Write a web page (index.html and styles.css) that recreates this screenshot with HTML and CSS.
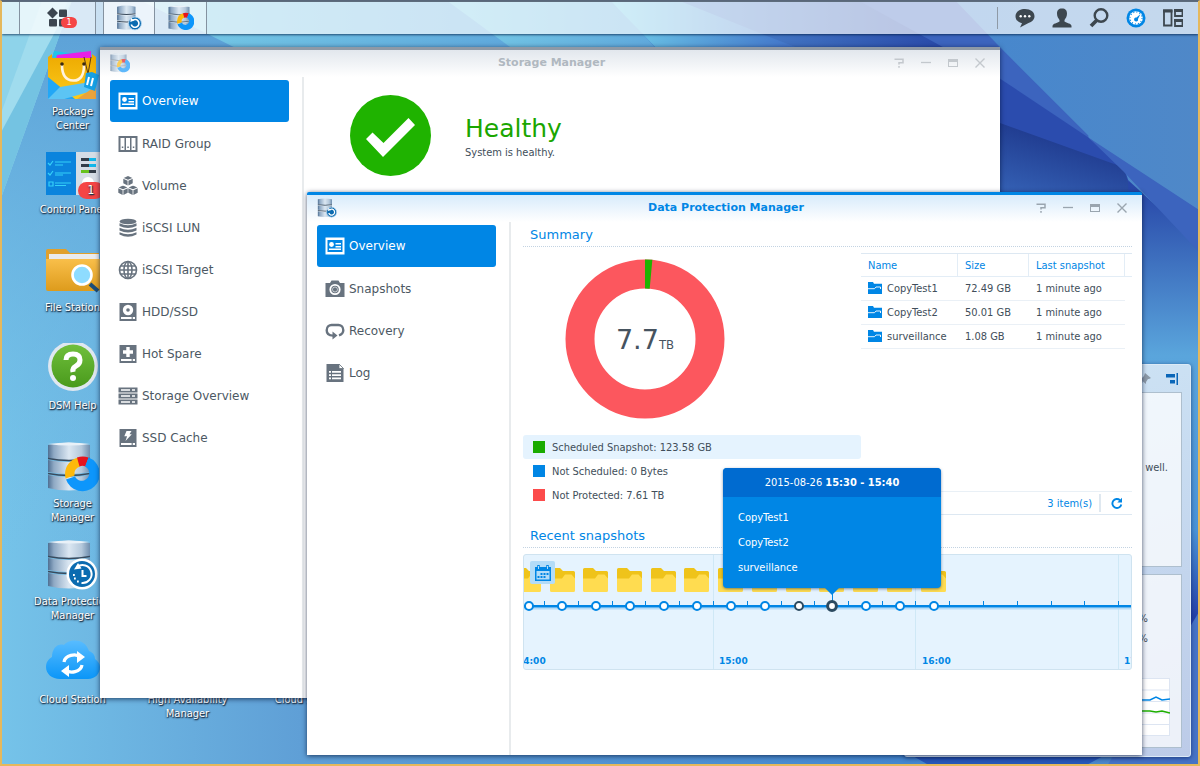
FILE: index.html
```html
<!DOCTYPE html>
<html lang="en">
<head>
  <meta charset="UTF-8" />
  <title>Disk Station</title>
  <link rel="stylesheet" href="styles.css">
</head>
<body>
  <!-- shared icon shapes -->
  <svg class="sprite" aria-hidden="true">
    <defs>
      <linearGradient id="metal" x1="0" x2="1" y1="0" y2="0">
        <stop offset="0" stop-color="#4f6f92"/>
        <stop offset=".14" stop-color="#8fa9c4"/>
        <stop offset=".5" stop-color="#dbe7f2"/>
        <stop offset=".8" stop-color="#b4c8db"/>
        <stop offset="1" stop-color="#6f8eae"/>
      </linearGradient>
      <linearGradient id="bag" x1="0" x2="0" y1="0" y2="1">
        <stop offset="0" stop-color="#eda900"/>
        <stop offset="1" stop-color="#fccb1c"/>
      </linearGradient>
      <linearGradient id="folderFill" x1="0" x2="0" y1="0" y2="1">
        <stop offset="0" stop-color="#f9bf4a"/>
        <stop offset="1" stop-color="#dd9b1c"/>
      </linearGradient>
      <linearGradient id="helpFill" x1="0" x2="0" y1="0" y2="1">
        <stop offset="0" stop-color="#6fbf3c"/>
        <stop offset="1" stop-color="#4a9a1c"/>
      </linearGradient>
      <linearGradient id="cloudFill" x1="0" x2="0" y1="0" y2="1">
        <stop offset="0" stop-color="#58bcff"/>
        <stop offset="1" stop-color="#0b96f8"/>
      </linearGradient>
    </defs>
    <symbol id="disks" viewBox="0 0 52 52">
      <path d="M1 4q20-5 42 0v13q-21 4-42 0z" fill="url(#metal)"/>
      <path d="M1 3q21-3 42 0q-21 3-42 0z" fill="#e9f1f8"/>
      <path d="M1 19q21 4 42 0v12q-21 4-42 0z" fill="url(#metal)"/>
      <path d="M1 34q21 4 42 0v13q-21 5-42 0z" fill="url(#metal)"/>
      <path d="M1 17.500q21 4 42 0M1 32.500q21 4 42 0" fill="none" stroke="#3a4a5c" stroke-width="1.500"/>
    </symbol>
    <symbol id="storage" viewBox="0 0 52 52">
      <use href="#disks"/>
      <path d="M35 33m-17 0a17 17 0 0 1 13-16.500l2 9a7.500 7.500 0 0 0-5.500 9l-9 3z" fill="#fdb90b"/>
      <path d="M30 16.500a17 17 0 0 1 11.500 0l-3 9a7.500 7.500 0 0 0-6 0z" fill="#e6131e"/>
      <path d="M41.500 16.500a17.400 17.400 0 1 1-22.500 22l9-3a7.500 7.500 0 1 0 10-10z" fill="#0d96fb"/>
    </symbol>
    <symbol id="protect" viewBox="0 0 52 52">
      <use href="#disks"/>
      <circle cx="35" cy="35" r="15.500" fill="#fff"/>
      <circle cx="35" cy="35" r="13" fill="#0b6bb0"/>
      <path d="M30 28a9 9 0 1 1 4.500 16" fill="none" stroke="#fff" stroke-width="2"/>
      <path d="M27 30.500l4-6.500 3.500 5.500z" fill="#fff"/>
      <path d="M35.500 31v6h4" fill="none" stroke="#fff" stroke-width="2"/>
      <path d="M26 36h1.800M27 39.500h1.800M30 42.500h1.800" stroke="#fff" stroke-width="1.800"/>
    </symbol>
    <symbol id="protect-small" viewBox="0 0 24 24">
      <path d="M1 1.500q8-2 17 0v6q-9 1.500-17 0zM1 9q9 1.500 17 0v5q-9 1.500-17 0zM1 16q9 1.500 17 0v6q-9 1.500-17 0z" fill="url(#metal)"/>
      <path d="M1 8q9 1.500 17 0M1 15q9 1.500 17 0" fill="none" stroke="#3a4a5c"/>
      <circle cx="17.500" cy="17" r="6" fill="#0b6bb0" stroke="#bfdcf2" stroke-width=".8"/>
      <path d="M15.500 14a3.600 3.600 0 1 1-1.400 4" fill="none" stroke="#fff" stroke-width="1.500"/>
      <path d="M13.200 15.700l.5-4 3.200 2.600z" fill="#fff"/>
    </symbol>
    <symbol id="overview" viewBox="0 0 20 20">
      <path fill-rule="evenodd" d="M.500 1.500h19v17H.500zM2.500 4v12h15V4z" fill="currentColor"/>
      <circle cx="6.500" cy="8.500" r="2.400" fill="currentColor"/>
      <path d="M10.500 7h5.500v1.500h-5.500zM10.500 10h5.500v1.500h-5.500zM4 12.500h12V14H4z" fill="currentColor"/>
    </symbol>
    <symbol id="raid" viewBox="0 0 20 20">
      <path fill-rule="evenodd" d="M.500 2h19v16H.500zM2.500 4v12h4V4zM8 4v12h4V4zM13.500 4v12h4V4z" fill="currentColor"/>
      <path d="M3.800 12.500h1.500v1.500H3.800zM9.300 12.500h1.500v1.500H9.300zM14.800 12.500h1.500v1.500h-1.500z" fill="currentColor"/>
    </symbol>
    <symbol id="cube" viewBox="0 0 10 10">
      <path d="M5 0l4.300 1.900L5 3.800.700 1.900zM.300 2.700l4.300 2v4.800l-4.300-2.200zM9.700 2.700l-4.300 2v4.800l4.300-2.200z" fill="currentColor"/>
    </symbol>
    <symbol id="volume" viewBox="0 0 20 20">
      <use href="#cube" x="5" y="0" width="10" height="10"/>
      <use href="#cube" x="0" y="9.500" width="10" height="10"/>
      <use href="#cube" x="10" y="9.500" width="10" height="10"/>
    </symbol>
    <symbol id="lun" viewBox="0 0 20 20">
      <ellipse cx="10" cy="3.500" rx="8.500" ry="2.800" fill="currentColor"/>
      <path d="M1.500 5.300q8.500 4 17 0v2.700q-8.500 4-17 0zM1.500 9.800q8.500 4 17 0v2.700q-8.500 4-17 0zM1.500 14.300q8.500 4 17 0v2.200q-8.500 4.500-17 0z" fill="currentColor"/>
    </symbol>
    <symbol id="globe" viewBox="0 0 20 20">
      <g fill="none" stroke="currentColor" stroke-width="1.600">
        <circle cx="10" cy="10" r="8.500"/>
        <ellipse cx="10" cy="10" rx="4" ry="8.500"/>
        <path d="M10 2v16M2 10h16M3 6h14M3 14h14"/>
      </g>
    </symbol>
    <symbol id="hdd" viewBox="0 0 20 20">
      <path fill-rule="evenodd" d="M1.500 1h17v18h-17zM3 15v2h14v-2z" fill="currentColor"/>
      <circle cx="10" cy="8" r="5.200" fill="#fff"/>
      <circle cx="10" cy="8" r="1.800" fill="currentColor"/>
      <path d="M13.500 15.300h1.500v1.500h-1.500z" fill="currentColor"/>
    </symbol>
    <symbol id="spare" viewBox="0 0 20 20">
      <path fill-rule="evenodd" d="M1.500 1h17v18h-17zM3 15v2h14v-2z" fill="currentColor"/>
      <path d="M8.300 3h3.400v3.300H15v3.400h-3.300V13H8.300V9.700H5V6.300h3.300z" fill="#fff"/>
      <path d="M13.500 15.300h1.500v1.500h-1.500z" fill="currentColor"/>
    </symbol>
    <symbol id="stack" viewBox="0 0 20 20">
      <path fill-rule="evenodd" d="M.500 1.500h19v5H.500zM3 3.200v1.500h9V3.200zM14 3.200v1.500h3V3.200zM.500 7.500h19v5H.500zM3 9.200v1.500h9V9.200zM14 9.200v1.500h3V9.200zM.500 13.500h19v5H.500zM3 15.200v1.500h9v-1.500zM14 15.200v1.500h3v-1.500z" fill="currentColor"/>
    </symbol>
    <symbol id="cache" viewBox="0 0 20 20">
      <path fill-rule="evenodd" d="M1.500 1h17v18h-17zM3 15v2h14v-2z" fill="currentColor"/>
      <path d="M8.500 3h5l-2 3.200h2.300L7.500 13l1.600-4.800H6.300z" fill="#fff"/>
      <path d="M13.500 15.300h1.500v1.500h-1.500z" fill="currentColor"/>
    </symbol>
    <symbol id="camera" viewBox="0 0 20 20">
      <path d="M.500 4H5l1.500-2.500h7L15 4h4.500v14H.500z" fill="currentColor"/>
      <circle cx="10" cy="10.500" r="4.700" fill="none" stroke="#fff" stroke-width="1.800"/>
      <circle cx="10" cy="10.500" r="2.500" fill="none" stroke="#fff" stroke-width=".6"/>
    </symbol>
    <symbol id="recover" viewBox="0 0 20 20">
      <path d="M14 14.300C17 13.300 18.300 11.500 18.300 9.200 18.300 5.500 15.500 4 13.500 4H6.500C4.500 4 1.700 5.500 1.700 9.200 1.700 12.500 4 14.500 8 14.600" fill="none" stroke="currentColor" stroke-width="2.400"/>
      <path d="M7.500 10.600l5 4-5 4z" fill="currentColor"/>
    </symbol>
    <symbol id="log" viewBox="0 0 20 20">
      <path d="M1.500 1H14l4.500 4.500V19h-17z" fill="currentColor"/>
      <path d="M14 1v4.500h4.500z" fill="#fff" stroke="currentColor" stroke-width=".8"/>
      <path d="M4 8h2v1.700H4zM7 8h9v1.700H7zM4 11.300h2V13H4zM7 11.300h9V13H7zM4 14.600h2v1.700H4zM7 14.600h9v1.700H7z" fill="#fff"/>
    </symbol>
    <symbol id="win-help" viewBox="0 0 10 10">
      <path d="M.5 1.200h8.500v3.600H5v1.700M5 8v1.700" fill="none" stroke="currentColor" stroke-width="1.500"/>
    </symbol>
    <symbol id="win-min" viewBox="0 0 10 10">
      <path d="M0 4.500h10" stroke="currentColor" stroke-width="1.300"/>
    </symbol>
    <symbol id="win-max" viewBox="0 0 10 10">
      <path fill-rule="evenodd" d="M0 1h10v8H0zM1 4v4h8V4z" fill="currentColor"/>
    </symbol>
    <symbol id="win-close" viewBox="0 0 10 10">
      <path d="M.5.5l9 9M9.500.5l-9 9" stroke="currentColor" stroke-width="1.400"/>
    </symbol>
    <symbol id="share" viewBox="0 0 14 12">
      <path d="M0 0h5l1 1.800h8V12H0z" fill="#0086e5"/>
      <path d="M0 6.700h6.500L8 5h4.500v2" fill="none" stroke="#fff" stroke-width=".9"/>
    </symbol>
    <symbol id="snap" viewBox="0 0 25 24">
      <path d="M0 1.500Q0 0 1.500 0H10l3 3h10.500q1.500 0 1.500 1.500V14H0z" fill="#efc31a"/>
      <path d="M0 10.500h12l3-4h6.500l3.500 4v12q0 1.500-1.500 1.500h-22Q0 24 0 22.500z" fill="#ffdc50"/>
    </symbol>
  </svg>

  <div class="desktop">
    <svg class="wallpaper" viewBox="0 0 1200 766" preserveAspectRatio="none" aria-hidden="true">
      <defs>
        <linearGradient id="sky" x1="0" x2="1" y1="0" y2="0">
          <stop offset="0" stop-color="#75c3e9"/>
          <stop offset=".25" stop-color="#5f9fd6"/>
          <stop offset=".75" stop-color="#4487cf"/>
          <stop offset="1" stop-color="#4f88c8"/>
        </linearGradient>
        <linearGradient id="leftSky" x1="0" x2="0" y1="0" y2="1">
          <stop offset="0" stop-color="#5b9fd6"/>
          <stop offset="1" stop-color="#75c3e9" stop-opacity="0"/>
        </linearGradient>
        <linearGradient id="beam" x1="0" x2="1" y1="0" y2="0">
          <stop offset="0" stop-color="#76cbe6"/>
          <stop offset="1" stop-color="#5fa8dc"/>
        </linearGradient>
        <linearGradient id="beamDark" x1="0" x2="1" y1="0" y2="0">
          <stop offset="0" stop-color="#6fcde9"/>
          <stop offset="1" stop-color="#3f6fc8"/>
        </linearGradient>
        <linearGradient id="indigo" x1="0" x2="1" y1="0" y2="0">
          <stop offset="0" stop-color="#4f8bd0"/>
          <stop offset="1" stop-color="#2848a8"/>
        </linearGradient>
        <linearGradient id="deep" x1="0" x2=".4" y1="1" y2="0">
          <stop offset="0" stop-color="#3f74c8"/>
          <stop offset="1" stop-color="#1c3488"/>
        </linearGradient>
        <linearGradient id="edge" x1="0" x2="0" y1="0" y2="1">
          <stop offset="0" stop-color="#2643a6"/>
          <stop offset=".3" stop-color="#5aa5dc"/>
          <stop offset=".6" stop-color="#4a93d6"/>
          <stop offset=".75" stop-color="#2440a8"/>
          <stop offset="1" stop-color="#3f78c8"/>
        </linearGradient>
      </defs>
      <rect width="1200" height="766" fill="url(#sky)"/>
      <rect width="310" height="600" fill="url(#leftSky)"/>
      <path d="M0 0h70L0 195z" fill="#8ed3ea"/>
      <path d="M40 0h26L0 160v-50z" fill="#a0dcee"/>
      <path d="M70 0L0 195V130z" fill="#74c3e2"/>
      <path d="M140 0h310l65 50H240z" fill="url(#beam)"/>
      <path d="M447 0h166l45 50H515z" fill="url(#beam)"/>
      <path d="M611 0h74l120 50H659z" fill="url(#beamDark)"/>
      <path d="M680 0h200l73 50H805z" fill="url(#indigo)"/>
      <path d="M860 0h97l43 45 90 90v60H1000V77z" fill="#3c64be"/>
      <path d="M1000 77l90 60 35 28 20 60H1000z" fill="#2b4cae"/>
      <path d="M1000 122l125 45 20 60H1000z" fill="url(#deep)"/>
      <path d="M1130 180l44 40 26 30v516h-70z" fill="url(#edge)"/>
      <path d="M1090 137l110 72v42l-75-80z" fill="#3c64be"/>
      <path d="M900 750h220l-30 16H928z" fill="#2757b8"/>
      <path d="M1200 615v151h-90z" fill="#4673c6"/>
    </svg>

    <header class="taskbar">
      <button class="task task-menu" aria-label="Main Menu">
        <svg width="24" height="24" viewBox="0 0 24 24"><g fill="#3c4650"><path d="M6.500 1.500L12 7l-5.500 5.500L1 7z"/><rect x="13" y="3.500" width="8" height="7.500" rx="1"/><rect x="3" y="13" width="8" height="7.500" rx="1"/><rect x="13" y="13" width="8" height="7.500" rx="1"/></g></svg>
        <span class="badge badge-menu">1</span>
      </button>
      <button class="task task-app task-open" aria-label="Data Protection Manager"><svg width="26" height="26"><use href="#protect-small"/></svg></button>
      <button class="task task-app" aria-label="Storage Manager"><svg width="26" height="26"><use href="#storage"/></svg></button>
      <div class="tray">
        <button aria-label="Notifications"><svg width="20" height="20" viewBox="0 0 20 20"><path d="M10 1c5.500 0 9.500 3 9.500 7.200 0 3.300-2.500 5.800-6 6.800L5 19.500l2-4.300C3 14.500.500 11.800.500 8.200.500 4 4.500 1 10 1z" fill="#3d474f"/><g fill="#fff"><circle cx="5.700" cy="8.300" r="1.200"/><circle cx="10" cy="8.300" r="1.200"/><circle cx="14.300" cy="8.300" r="1.200"/></g></svg></button>
        <button aria-label="Options"><svg width="20" height="20" viewBox="0 0 20 20"><path d="M10 .500c3.500 0 5 2 5 5 0 3-1.200 4.500-2.500 6.500v1.500c2 1.500 7 2 7 4.500v1.500H.500V18c0-2.500 5-3 7-4.500V12C6.200 10 5 8.500 5 5.500c0-3 1.500-5 5-5z" fill="#3d474f"/></svg></button>
        <button aria-label="Search"><svg width="20" height="20" viewBox="0 0 20 20"><circle cx="12" cy="7.500" r="6.300" fill="none" stroke="#3d474f" stroke-width="2.400"/><path d="M7.500 12.500L2 18" stroke="#3d474f" stroke-width="3.800"/></svg></button>
        <button aria-label="Widgets"><svg width="20" height="20" viewBox="0 0 20 20"><circle cx="10" cy="10" r="9.500" fill="#0086e5"/><circle cx="10" cy="10" r="6.800" fill="#fff"/><circle cx="10" cy="10" r="6" fill="none" stroke="#0086e5" stroke-width="1.200" stroke-dasharray="1 2.100"/><path d="M10.500 9.500l4-3.500-2.500 5a2 2 0 1 1-1.500-1.500z" fill="#0086e5"/></svg></button>
        <button aria-label="Pilot View"><svg width="20" height="20" viewBox="0 0 20 20"><g fill="none" stroke="#3d474f" stroke-width="1.800"><path d="M1 2.500h7.500v15H1zM12 2h7.500v6H12zM12 12h7.500v6H12z"/><path d="M0 3h9.500M11 2.500h9M11 12.500h9" stroke-width="2.800"/></g></svg></button>
      </div>
    </header>

    <div class="shortcuts">
      <a class="shortcut" href="#">
        <svg width="52" height="52" viewBox="0 0 52 52"><path d="M7 2l22 3v8H5z" fill="#22c3ea"/><path d="M10 6l34-4v12H8z" fill="#e81fe8"/><path d="M1 8l4-3v4h40V5l4 3v42H1z" fill="url(#bag)"/><path d="M1 28l27 22H1z" fill="#22a7f6"/><path d="M49 32L1 50h16z" fill="#58c4f8"/><path d="M13 38l36-6v9L17 50H1z" fill="#5cc4f4"/><path d="M30 50l19-13v13z" fill="#e9a33c"/><path d="M15 16q0 15 11 15.500T37 16" fill="none" stroke="#fff3dc" stroke-width="2.600"/><circle cx="15" cy="15" r="1.800" fill="#3a2a12"/><circle cx="37" cy="15" r="1.800" fill="#3a2a12"/><path d="M37 8l4 17M44 8l-3 17" stroke="#5b3b14" fill="none"/><path d="M39 24l6-1 7 3-4 16-11-4z" fill="#16a0e4"/><path d="M42 28l-2 8M46 29l-2 8" stroke="#fff" stroke-width="2"/></svg>
        <span>Package<br>Center</span>
      </a>
      <a class="shortcut" href="#">
        <svg width="54" height="52" viewBox="0 0 54 52"><path d="M0 5h30v43H0z" fill="#0b84dd"/><path d="M30 5h24v43H30z" fill="#d5dde5"/><g stroke="#35d0f8" fill="none" stroke-width="1.200"><path d="M2 16l2 2 3-4M2 26l2 2 3-4M3 35h4v4H3zM9 15h16M9 18h8M9 26h16M9 28h8M9 36h16M9 38.500h11"/></g><path d="M35 11h8v3h-8zM35 17h8v3h-8zM43 23h7v3h-7z" fill="#333d48"/><path d="M43 11h7v3h-7zM43 17h7v3h-7z" fill="#12b7ea"/><path d="M35 23h8v3h-8z" fill="#67c21d"/><circle cx="42" cy="36" r="6" fill="#fff"/></svg>
        <b class="badge badge-panel">1</b>
        <span>Control Panel</span>
      </a>
      <a class="shortcut" href="#">
        <svg width="56" height="52" viewBox="0 0 56 52"><path d="M1 6q0-2 2-2h18l4 4h29v12H1z" fill="#e0a02c"/><path d="M4 9h50v8H4z" fill="#e9ebee"/><path d="M1 14h54v30q0 2-2 2H3q-2 0-2-2z" fill="url(#folderFill)"/><path d="M45 39l8 7" stroke="#1b4d78" stroke-width="4"/><circle cx="37" cy="30" r="9.500" fill="#8edcff" stroke="#fff" stroke-width="2.600"/></svg>
        <span>File Station</span>
      </a>
      <a class="shortcut" href="#">
        <svg width="52" height="52" viewBox="0 3 52 52"><circle cx="26" cy="26" r="25" fill="#dfe7f0"/><circle cx="26" cy="26" r="21.500" fill="url(#helpFill)"/><path d="M19 20q0-6 7-6t7 6q0 4-4 6t-3 6" fill="none" stroke="#fff" stroke-width="5"/><circle cx="26" cy="38" r="3" fill="#fff"/></svg>
        <span>DSM Help</span>
      </a>
      <a class="shortcut" href="#">
        <svg width="52" height="52"><use href="#storage"/></svg>
        <span>Storage<br>Manager</span>
      </a>
      <a class="shortcut" href="#">
        <svg width="52" height="52"><use href="#protect"/></svg>
        <span>Data Protection<br>Manager</span>
      </a>
      <a class="shortcut" href="#">
        <svg width="54" height="52" viewBox="0 3 54 52"><path d="M14 45C6 45 0 40 0 33c0-6 4-9 6-10 0-9 6-14 12-12 4-6 21-8 25 6 5 2 6 5 6 8 3 2 5 5 5 8 0 7-5 12-12 12z" fill="url(#cloudFill)"/><path d="M18 28c1-7 12-9 16-5M36 31c-1 7-12 9-16 5" fill="none" stroke="#fff" stroke-width="3.200"/><path d="M31 17l8 6-8 6zM23 31l-8 6 8 6z" fill="#fff"/></svg>
        <span>Cloud Station</span>
      </a>
      <a class="shortcut second" href="#"><span>High Availability<br>Manager</span></a>
      <a class="shortcut third" href="#"><span>Cloud Sync</span></a>
    </div>

    <aside class="widgets">
      <div class="widgets-bar">
        <svg width="12" height="12" viewBox="0 0 12 12"><path d="M6 0l6 5-2 1-1 0-2 3v2L1 6l2-1 2-2zM3 8l1 1-4 3z" fill="#8d9aa8"/></svg>
        <svg width="12" height="12" viewBox="0 0 12 12"><path d="M0 1h9v3.500H0zM4 7h5v3.500H4zM10.500 0H12v12h-1.500z" fill="#0a66b8"/></svg>
      </div>
      <section class="card card-health"><p>well.</p></section>
      <section class="card card-load">
        <p>%</p>
        <p>%</p>
        <svg width="60" height="58" viewBox="0 0 60 58"><rect x=".5" y=".5" width="59" height="57" fill="#fff" stroke="#dde5f2"/><path d="M0 12h60M0 23.500h60M0 35h60M0 46.500h60" stroke="#dde5f2"/><path d="M0 22h40l6-3 6 3 8-1" fill="none" stroke="#0086e5" stroke-width="1.500"/><path d="M0 33h40l6 1 6-1 8 2" fill="none" stroke="#1fb000" stroke-width="1.500"/></svg>
      </section>
    </aside>

    <div class="window window-storage">
      <header class="titlebar">
        <svg class="title-icon" width="20" height="20"><use href="#storage"/></svg>
        <h2>Storage Manager</h2>
        <div class="controls">
          <button aria-label="Help"><svg width="10" height="10"><use href="#win-help"/></svg></button>
          <button aria-label="Minimize"><svg width="10" height="10"><use href="#win-min"/></svg></button>
          <button aria-label="Maximize"><svg width="10" height="10"><use href="#win-max"/></svg></button>
          <button aria-label="Close"><svg width="10" height="10"><use href="#win-close"/></svg></button>
        </div>
      </header>
      <div class="window-body">
        <nav class="side">
          <a class="side-item active" href="#"><svg width="20" height="20"><use href="#overview"/></svg>Overview</a>
          <a class="side-item" href="#"><svg width="20" height="20"><use href="#raid"/></svg>RAID Group</a>
          <a class="side-item" href="#"><svg width="20" height="20"><use href="#volume"/></svg>Volume</a>
          <a class="side-item" href="#"><svg width="20" height="20"><use href="#lun"/></svg>iSCSI LUN</a>
          <a class="side-item" href="#"><svg width="20" height="20"><use href="#globe"/></svg>iSCSI Target</a>
          <a class="side-item" href="#"><svg width="20" height="20"><use href="#hdd"/></svg>HDD/SSD</a>
          <a class="side-item" href="#"><svg width="20" height="20"><use href="#spare"/></svg>Hot Spare</a>
          <a class="side-item" href="#"><svg width="20" height="20"><use href="#stack"/></svg>Storage Overview</a>
          <a class="side-item" href="#"><svg width="20" height="20"><use href="#cache"/></svg>SSD Cache</a>
        </nav>
        <main class="health">
          <svg width="81" height="81" viewBox="0 0 81 81"><circle cx="40.500" cy="40.500" r="40.500" fill="#1fb300"/><path d="M16 44l6.500-6.500L33.500 48l25-25 6.500 7-32 32z" fill="#fff"/></svg>
          <div>
            <h1>Healthy</h1>
            <p>System is healthy.</p>
          </div>
        </main>
      </div>
    </div>

    <div class="window window-protect">
      <header class="titlebar">
        <svg class="title-icon" width="20" height="20"><use href="#protect-small"/></svg>
        <h2>Data Protection Manager</h2>
        <div class="controls">
          <button aria-label="Help"><svg width="10" height="10"><use href="#win-help"/></svg></button>
          <button aria-label="Minimize"><svg width="10" height="10"><use href="#win-min"/></svg></button>
          <button aria-label="Maximize"><svg width="10" height="10"><use href="#win-max"/></svg></button>
          <button aria-label="Close"><svg width="10" height="10"><use href="#win-close"/></svg></button>
        </div>
      </header>
      <div class="window-body">
        <nav class="side">
          <a class="side-item active" href="#"><svg width="20" height="20"><use href="#overview"/></svg>Overview</a>
          <a class="side-item" href="#"><svg width="20" height="20"><use href="#camera"/></svg>Snapshots</a>
          <a class="side-item" href="#"><svg width="20" height="20"><use href="#recover"/></svg>Recovery</a>
          <a class="side-item" href="#"><svg width="20" height="20"><use href="#log"/></svg>Log</a>
        </nav>
        <main class="panel">
          <h3>Summary</h3>
          <div class="summary">
            <div class="usage">
              <svg class="donut" width="160" height="160" viewBox="0 0 160 160">
                <circle cx="80" cy="80" r="65" fill="none" stroke="#fc575e" stroke-width="29"/>
                <circle cx="80" cy="80" r="65" fill="none" stroke="#1fb300" stroke-width="29" pathLength="100" stroke-dasharray="1.500 98.500" transform="rotate(-90 80 80)"/>
                <text x="80" y="90" text-anchor="middle"><tspan class="donut-value">7.7</tspan><tspan class="donut-unit">TB</tspan></text>
              </svg>
              <ul class="legend">
                <li class="on"><i class="green"></i>Scheduled Snapshot: 123.58 GB</li>
                <li><i class="blue"></i>Not Scheduled: 0 Bytes</li>
                <li><i class="red"></i>Not Protected: 7.61 TB</li>
              </ul>
            </div>
            <div class="listing">
              <table>
                <colgroup><col class="c-name"><col class="c-size"><col class="c-last"><col></colgroup>
                <thead>
                  <tr><th>Name</th><th>Size</th><th>Last snapshot</th><th></th></tr>
                </thead>
                <tbody>
                  <tr><td><svg width="14" height="12"><use href="#share"/></svg>CopyTest1</td><td>72.49 GB</td><td>1 minute ago</td></tr>
                  <tr><td><svg width="14" height="12"><use href="#share"/></svg>CopyTest2</td><td>50.01 GB</td><td>1 minute ago</td></tr>
                  <tr><td><svg width="14" height="12"><use href="#share"/></svg>surveillance</td><td>1.08 GB</td><td>1 minute ago</td></tr>
                </tbody>
              </table>
              <div class="pager">
                <span>3 item(s)</span>
                <button aria-label="Refresh"><svg width="12" height="12" viewBox="0 0 12 12"><path d="M10.300 7.500A4.500 4.500 0 1 1 9 3.200" fill="none" stroke="#0086e5" stroke-width="1.900"/><path d="M11 .800v4.700H6.300z" fill="#0086e5"/></svg></button>
              </div>
            </div>
          </div>

          <h3>Recent snapshots</h3>
          <div class="timeline">
            <svg class="track" width="100%" height="114">
              <path d="M189.500 0v114M391.500 0v114M594.500 0v114" stroke="#cfe8f6"/>
              <g>
                <use href="#snap" x="-8" y="13" width="25" height="24"/>
                <use href="#snap" x="26" y="13" width="25" height="24"/>
                <use href="#snap" x="59" y="13" width="25" height="24"/>
                <use href="#snap" x="93" y="13" width="25" height="24"/>
                <use href="#snap" x="127" y="13" width="25" height="24"/>
                <use href="#snap" x="160" y="13" width="25" height="24"/>
                <use href="#snap" x="194" y="13" width="25" height="24"/>
                <use href="#snap" x="228" y="13" width="25" height="24"/>
                <use href="#snap" x="262" y="13" width="25" height="24"/>
                <use href="#snap" x="295" y="13" width="25" height="24"/>
                <use href="#snap" x="329" y="13" width="25" height="24"/>
                <use href="#snap" x="363" y="13" width="25" height="24"/>
                <use href="#snap" x="397" y="13" width="25" height="24"/>
              </g>
              <path d="M20.500 46v5M54.500 46v5M88.500 46v5M121.500 46v5M155.500 46v5M189.500 46v5M223.500 46v5M257.500 46v5M290.500 46v5M324.500 46v5M358.500 46v5M391.500 46v5M425.500 46v5M459.500 46v5M493.500 46v5M527.500 46v5M560.500 46v5M594.500 46v5" stroke="#0086e5"/>
              <path d="M0 53.500h2000" stroke="#b5dcf7" stroke-width="2"/>
              <path d="M0 51.200h2000" stroke="#0086e5" stroke-width="2.600"/>
              <path d="M308.500 38v10" stroke="#0086e5"/>
              <g class="dots">
                <circle cx="5" cy="51" r="4"/>
                <circle cx="38" cy="51" r="4"/>
                <circle cx="72" cy="51" r="4"/>
                <circle cx="106" cy="51" r="4"/>
                <circle cx="140" cy="51" r="4"/>
                <circle cx="173" cy="51" r="4"/>
                <circle cx="207" cy="51" r="4"/>
                <circle cx="241" cy="51" r="4"/>
                <circle class="dark" cx="275" cy="51" r="4"/>
                <circle class="dark current" cx="308" cy="51" r="4.400"/>
                <circle cx="342" cy="51" r="4"/>
                <circle cx="376" cy="51" r="4"/>
                <circle cx="410" cy="51" r="4"/>
              </g>
              <g class="hours">
                <text x="-7" y="109">14:00</text>
                <text x="195" y="109">15:00</text>
                <text x="398" y="109">16:00</text>
                <text x="600" y="109">17:00</text>
              </g>
            </svg>
            <button class="calendar" aria-label="Pick a date"><svg width="16" height="16" viewBox="0 0 16 16"><path fill-rule="evenodd" d="M0 2h16v14H0zM1.500 6v8.500h13V6z" fill="#0086e5"/><path d="M3.500 0v4M12.500 0v4" stroke="#0086e5" stroke-width="2.500"/><path d="M3.500 1v3M12.500 1v3" stroke="#b3dcf8"/><path d="M5.500 8h2v2h-2zM8.500 8h2v2h-2zM11.500 8h2v2h-2zM2.500 11h2v2h-2zM5.500 11h2v2h-2zM8.500 11h2v2h-2z" fill="#0086e5"/></svg></button>
            <div class="tip">
              <div class="tip-head">2015-08-26 <b>15:30 - 15:40</b></div>
              <ul>
                <li>CopyTest1</li>
                <li>CopyTest2</li>
                <li>surveillance</li>
              </ul>
            </div>
          </div>
        </main>
      </div>
    </div>
  </div>
</body>
</html>
```

FILE: styles.css
```css
* {
  margin: 0;
  padding: 0;
  box-sizing: border-box;
}
body {
  font-family: 'DejaVu Sans Condensed', 'DejaVu Sans', Verdana, sans-serif;
  font-size: 11px;
  color: #414e5a;
}
ul { list-style: none; }
a { text-decoration: none; color: inherit; }
button { border: none; background: none; font: inherit; color: inherit; cursor: pointer; }
svg { display: block; flex: none; }
.sprite { position: absolute; width: 0; height: 0; }

/* DESKTOP */
.desktop {
  position: relative;
  height: 100vh;
  overflow: hidden;
  border: 2px solid #e5b85c;
  border-top: 1px solid #59677a;
}
.wallpaper { position: absolute; inset: 0; width: 100%; height: 100%; }

/* TASKBAR */
.taskbar {
  position: relative;
  display: flex;
  height: 33px;
  padding-left: 17px;
  background: rgba(255,255,255,.67);
  border-top: 1px solid #5d6c7c;
  box-shadow: 0 1px 2px rgba(0,30,70,.7);
}
.task {
  position: relative;
  display: flex;
  align-items: center;
  justify-content: center;
  width: 52px;
  border-right: 1px solid #8492a0;
  background: rgba(255,255,255,.3);
}
.task-menu { width: 77px; margin-right: 7px; border-left: 1px solid #8492a0; }
.task-open { background: rgba(255,255,255,.65); border-left: 1px solid #8492a0; }
.tray {
  display: flex;
  align-items: center;
  margin: 5px 7px 5px auto;
  border-left: 1px solid #8f9aa6;
  padding-left: 8px;
}
.tray button { display: flex; justify-content: center; width: 37px; }
.badge {
  position: absolute;
  border-radius: 9px;
  background: #f54545;
  color: #fff;
  text-align: center;
}
.badge-menu { left: 41px; top: 15px; width: 16px; height: 11px; font-size: 9px; line-height: 11px; }
.badge-panel { left: 63px; top: 35px; width: 26px; height: 17px; font-size: 12px; line-height: 17px; font-weight: normal; }

/* SHORTCUTS */
.shortcuts {
  position: absolute;
  left: 13px; top: 48px;
  display: grid;
  grid-template-columns: repeat(3, 115px);
  grid-template-rows: repeat(7, 98px);
  grid-auto-flow: column;
}
.shortcut {
  position: relative;
  display: flex;
  flex-direction: column;
  align-items: center;
  justify-content: flex-start;
  gap: 4px;
  color: #fff;
  line-height: 14px;
  text-align: center;
  text-shadow: 1px 1px 1px #1c2f45, 0 1px 2px #1c2f45;
}
.second { grid-column: 2; grid-row: 7; padding-top: 56px; }
.third { grid-column: 3; grid-row: 7; padding-top: 56px; }

/* WIDGETS */
.widgets {
  position: absolute;
  right: 7px; top: 363px; bottom: 7px;
  width: 287px;
  display: grid;
  grid-template-rows: 20px 1fr 1fr;
  gap: 7px;
  padding: 0 8px 8px;
  background: linear-gradient(160deg, #cfe6f6, #bccbe8);
  border: 1px solid #dceaf6;
  border-radius: 3px;
  box-shadow: 0 1px 4px rgba(0,20,80,.6);
  text-align: right;
}
.widgets-bar {
  display: flex;
  justify-content: flex-end;
  align-items: flex-end;
  gap: 15px;
  padding-right: 4px;
}
.card {
  background: rgba(255,255,255,.72);
  border: 1px solid #aebfce;
  padding-right: 11px;
}
.card-health { padding-right: 13px; padding-top: 68px; }
.card-load { padding-top: 34px; }
.card-load p { padding-right: 22px; line-height: 20px; }
.card-load svg { margin: 29px 0 0 auto; }

/* WINDOWS */
.window {
  position: absolute;
  display: flex;
  flex-direction: column;
  background: #fff;
  border-top: 3px solid #8e99a6;
  box-shadow: 0 1px 5px rgba(0,15,50,.7);
}
.window-storage { left: 98px; top: 46px; right: 198px; bottom: 66px; }
.window-protect { left: 305px; top: 191px; right: 56px; bottom: 9px; border-top-color: #0086e5; border-radius: 2px 2px 0 0; }
.titlebar {
  display: grid;
  grid-template-columns: 1fr auto 1fr;
  align-items: center;
  height: 27px;
  padding: 0 7px 2px 10px;
  background: linear-gradient(#e2e7ed, #fff);
  color: #b0b8c0;
}
.titlebar h2 { font: bold 11px 'DejaVu Sans', Verdana, sans-serif; }
.window-storage .title-icon { opacity: .65; }
.window-protect .titlebar { background: linear-gradient(#d8ebfb, #fff); color: #0086e5; }
.controls { display: flex; justify-content: flex-end; }
.controls button { display: flex; justify-content: center; width: 27px; color: #c3c8cd; }
.window-protect .controls button { color: #9aa5af; }
.window-body { display: flex; flex: 1; min-height: 0; }
.side {
  flex: none;
  width: 204px;
  padding: 3px 13px 0 10px;
  border-right: 2px solid #e8ebed;
}
.side-item {
  display: flex;
  align-items: center;
  gap: 4px;
  height: 42px;
  padding-left: 8px;
  border-radius: 3px;
  color: #4c5863;
  font: 12px 'DejaVu Sans', Verdana, sans-serif;
}
.side-item svg { color: #68737f; }
.active, .active svg { color: #fff; }
.active { margin-bottom: 1px; background: #0086e5; }

/* HEALTH */
.health {
  flex: 1;
  display: flex;
  align-items: flex-start;
  gap: 34px;
  padding: 18px 0 0 46px;
}
.health h1 {
  margin-top: 18px;
  color: #1aa600;
  font: 25px/32px 'DejaVu Sans', Verdana, sans-serif;
}
.health p { line-height: 16px; }

/* PANEL */
.panel { flex: 1; min-width: 0; padding: 0 10px 0 12px; }
.panel h3 {
  height: 25px;
  padding-left: 7px;
  border-bottom: 1px dotted #c3d3e2;
  color: #0086e5;
  font: 13px/26px 'DejaVu Sans', Verdana, sans-serif;
}
.summary { display: grid; grid-template-columns: 1fr 271px; margin-bottom: 8px; }
.usage { padding: 12px 0 8px; }
.donut { margin: 0 0 16px 42px; }
.donut text { fill: #46535f; }
.donut-value { font: 27px 'DejaVu Sans', Verdana, sans-serif; }
.donut-unit { font-size: 13px; }
.legend li { display: flex; align-items: center; gap: 7px; height: 24px; padding-left: 10px; }
.legend .on { background: #e5f3fe; border-radius: 3px; }
.legend i { width: 12px; height: 12px; }
.green { background: #1aab00; }
.blue { background: #0086e5; }
.red { background: #fc4b4b; }

.listing { display: flex; flex-direction: column; justify-content: space-between; padding-top: 6px; }
table { width: 100%; border-collapse: separate; border-spacing: 0; border-top: 1px solid #dde8f2; table-layout: fixed; }
.c-name { width: 97px; }
.c-size { width: 71px; }
.c-last { width: 96px; }
th {
  height: 23px;
  padding-left: 7px;
  border-bottom: 1px solid #e3edf6;
  border-right: 1px solid #e3edf6;
  color: #0086e5;
  font-weight: normal;
  text-align: left;
}
th:last-child { border-right: none; }
td { height: 24px; padding-left: 7px; border-bottom: 1px solid #eaf0f6; white-space: nowrap; }
td svg { display: inline-block; margin-right: 5px; vertical-align: -2px; }
.pager {
  display: flex;
  align-items: center;
  justify-content: flex-end;
  height: 24px;
  border-top: 1px solid #e9f0f6;
  border-bottom: 1px solid #dde8f2;
  color: #0086e5;
}
.pager button { margin-left: 7px; padding: 3px 9px 3px 10px; border-left: 2px solid #dfe8f0; }

/* TIMELINE */
.timeline {
  position: relative;
  margin-top: 6px;
  background: #e5f3fe;
  border: 1px solid #cfe3f0;
  border-radius: 3px;
}
.track { overflow: hidden; }
.dots circle { fill: #fff; stroke: #0086e5; stroke-width: 2; }
.dots .dark { stroke: #2b4a60; }
.dots .current { stroke-width: 3; }
.hours { fill: #0086e5; font: bold 9px 'DejaVu Sans', Verdana, sans-serif; }
.calendar {
  position: absolute;
  left: 6px; top: 6px;
  display: flex;
  align-items: center;
  justify-content: center;
  width: 25px;
  height: 23px;
  border-radius: 2px;
  background: #b3dcf8;
}
.tip {
  position: absolute;
  left: 199px; top: -87px;
  width: 218px;
  height: 120px;
  border-radius: 4px;
  background: #0086e5;
  color: #fff;
  box-shadow: 0 1px 3px rgba(0,40,90,.5);
}
.tip::after {
  content: '';
  position: absolute;
  left: 102px; top: 120px;
  border: 7px solid transparent;
  border-top-color: #0086e5;
  border-bottom: none;
}
.tip-head {
  height: 29px;
  line-height: 29px;
  border-radius: 4px 4px 0 0;
  background: #006bd0;
  text-align: center;
}
.tip ul { padding: 8px 15px; }
.tip li { line-height: 25px; }
```
